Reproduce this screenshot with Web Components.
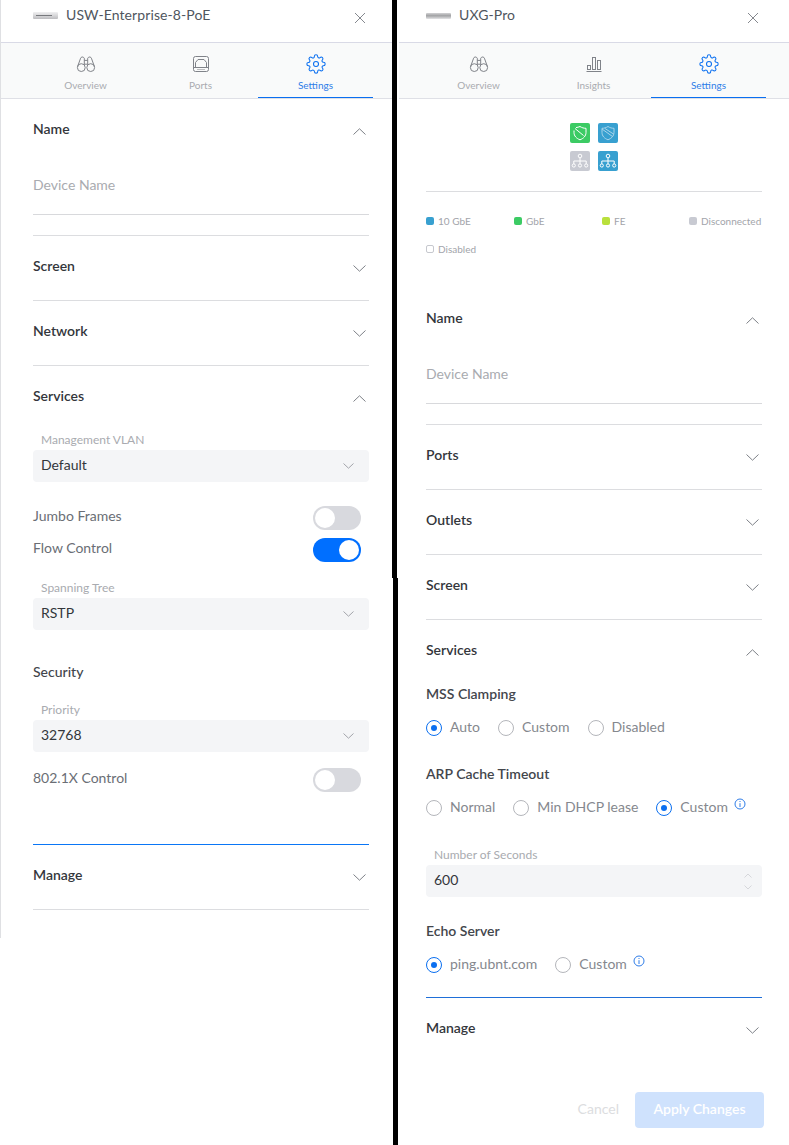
<!DOCTYPE html>
<html lang="en">
<head>
<meta charset="utf-8">
<title>Device settings</title>
<style>
html, body { margin: 0; padding: 0; background: #fff; }
body { width: 789px; height: 1145px; overflow: hidden; font-family: Lato, "Open Sans", sans-serif; }
#page { display: flex; height: 1145px; }
.gap {
    flex: 0 0 6px;
    background:
        linear-gradient(#000, #000) 0 0 / 5px 578px no-repeat,
        linear-gradient(#000, #000) 1px 578px / 5px 567px no-repeat;
}
device-panel.left { flex: 0 0 392px; height: 938px; --pl: 32px; --pr: 23px; --tabs-l: 27px; --bl: #dfe0e3; }
device-panel.right { flex: 0 0 391px; height: 1145px; --pl: 27px; --pr: 27px; --tabs-l: 22px; --bl: transparent; }
</style>
</head>
<body>
<div id="page">
    <device-panel class="left" name="USW-Enterprise-8-PoE">
        <device-thumb slot="thumb" kind="switch"></device-thumb>
        <panel-tab slot="tabs" label="Overview" icon="overview"></panel-tab>
        <panel-tab slot="tabs" label="Ports" icon="ports"></panel-tab>
        <panel-tab slot="tabs" label="Settings" icon="settings" active></panel-tab>

        <acc-section title="Name" open><text-field placeholder="Device Name"></text-field></acc-section>
        <acc-section title="Screen"></acc-section>
        <acc-section title="Network"></acc-section>
        <acc-section title="Services" open tight line="#0a76f6">
            <select-field label="Management VLAN" value="Default"></select-field>
            <toggle-row label="Jumbo Frames" style="margin-top:24px"></toggle-row>
            <toggle-row label="Flow Control" on style="margin-top:8px"></toggle-row>
            <select-field label="Spanning Tree" value="RSTP" style="margin-top:16px"></select-field>
            <sub-head style="margin-top:32px" light>Security</sub-head>
            <select-field label="Priority" value="32768" style="margin-top:18px"></select-field>
            <toggle-row label="802.1X Control" style="margin-top:16px;margin-bottom:52px"></toggle-row>
        </acc-section>
        <acc-section title="Manage"></acc-section>
    </device-panel>

    <div class="gap"></div>

    <device-panel class="right" name="UXG-Pro">
        <device-thumb slot="thumb" kind="gateway"></device-thumb>
        <panel-tab slot="tabs" label="Overview" icon="overview"></panel-tab>
        <panel-tab slot="tabs" label="Insights" icon="insights"></panel-tab>
        <panel-tab slot="tabs" label="Settings" icon="settings" active></panel-tab>

        <port-summary></port-summary>

        <acc-section title="Name" open><text-field placeholder="Device Name"></text-field></acc-section>
        <acc-section title="Ports"></acc-section>
        <acc-section title="Outlets"></acc-section>
        <acc-section title="Screen"></acc-section>
        <acc-section title="Services" open tight line="#1f6fd8">
            <sub-head>MSS Clamping</sub-head>
            <radio-row style="margin-top:12px">
                <radio-item label="Auto" checked></radio-item>
                <radio-item label="Custom"></radio-item>
                <radio-item label="Disabled"></radio-item>
            </radio-row>
            <sub-head style="margin-top:24px">ARP Cache Timeout</sub-head>
            <radio-row style="margin-top:12px">
                <radio-item label="Normal"></radio-item>
                <radio-item label="Min DHCP lease"></radio-item>
                <radio-item label="Custom" checked info></radio-item>
            </radio-row>
            <select-field label="Number of Seconds" value="600" stepper style="margin-top:25px"></select-field>
            <sub-head style="margin-top:24px">Echo Server</sub-head>
            <radio-row style="margin-top:12px;margin-bottom:20px">
                <radio-item label="ping.ubnt.com" checked></radio-item>
                <radio-item label="Custom" info></radio-item>
            </radio-row>
        </acc-section>
        <acc-section title="Manage" noline></acc-section>
        <panel-footer></panel-footer>
    </device-panel>
</div>

<script>
const icons = {
    overview: `<svg width="20" height="20" viewBox="0 0 20 20" fill="none" stroke="currentColor" stroke-width="1">
        <circle cx="5.3" cy="13.6" r="3.9"/><circle cx="14.7" cy="13.6" r="3.9"/>
        <path d="M1.5 12.8 4.6 4.2C4.9 3 6.9 2.6 7.6 3.4L8.3 4.2V10.8M18.5 12.8 15.4 4.2C15.1 3 13.1 2.6 12.4 3.4L11.7 4.2V10.8M8.3 6.4H11.7M8.3 10.2H11.7"/>
    </svg>`,
    ports: `<svg width="20" height="20" viewBox="0 0 20 20" fill="none" stroke="currentColor" stroke-width="1">
        <rect x="2.5" y="2.5" width="15" height="15" rx="2"/>
        <path d="M4.5 13.5V8.5L7 5.5H13L15.5 8.5V13.5"/><path d="M2.5 13.5H17.5"/>
        <path d="M6.5 15.5H13.5" stroke-dasharray="1 1"/>
    </svg>`,
    insights: `<svg width="20" height="20" viewBox="0 0 20 20" fill="none" stroke="currentColor" stroke-width="1">
        <path d="M2.5 17.5H17.5"/><rect x="3.5" y="11.5" width="3" height="4"/><rect x="8.5" y="3.5" width="3" height="12"/><rect x="13.5" y="6.5" width="3" height="9"/>
    </svg>`,
    settings: `<svg width="20" height="20" viewBox="0 0 24 24" fill="none" stroke="currentColor" stroke-width="1.25" stroke-linejoin="round">
        <circle cx="12" cy="12" r="3"/>
        <path d="M19.4 15a1.65 1.65 0 0 0 .33 1.82l.06.06a2 2 0 1 1-2.83 2.83l-.06-.06a1.65 1.65 0 0 0-1.82-.33 1.65 1.65 0 0 0-1 1.51V21a2 2 0 1 1-4 0v-.09A1.65 1.65 0 0 0 9 19.4a1.65 1.65 0 0 0-1.82.33l-.06.06a2 2 0 1 1-2.83-2.83l.06-.06a1.65 1.65 0 0 0 .33-1.82 1.65 1.65 0 0 0-1.51-1H3a2 2 0 1 1 0-4h.09A1.65 1.65 0 0 0 4.6 9a1.65 1.65 0 0 0-.33-1.82l-.06-.06a2 2 0 1 1 2.83-2.83l.06.06a1.65 1.65 0 0 0 1.82.33H9a1.65 1.65 0 0 0 1-1.51V3a2 2 0 1 1 4 0v.09a1.65 1.65 0 0 0 1 1.51 1.65 1.65 0 0 0 1.82-.33l.06-.06a2 2 0 1 1 2.83 2.83l-.06.06a1.65 1.65 0 0 0-.33 1.82V9a1.65 1.65 0 0 0 1.51 1H21a2 2 0 1 1 0 4h-.09a1.65 1.65 0 0 0-1.51 1z"/>
    </svg>`,
    shield: `<svg width="20" height="20" viewBox="0 0 20 20" fill="none" stroke="#fff" stroke-width="1">
        <path d="M6 4.6C7.5 4.4 8.8 4 10 3.5 12 4.8 13.8 5.3 16 5.3V9.5C16 13 13.5 15.5 10 16.8 6.5 15.5 4 13 4 9.5V7.5"/><path d="M5 5.5 13.5 12.5"/>
    </svg>`,
    shieldDim: `<svg width="20" height="20" viewBox="0 0 20 20" fill="none" stroke="#a8d4ea" stroke-width="1">
        <path d="M10 3.5C12 4.8 13.8 5.3 16 5.3V9.5C16 13 13.5 15.5 10 16.8 6.5 15.5 4 13 4 9.5V5.3C6.2 5.3 8 4.8 10 3.5Z"/><path d="M4 6 14.5 13.5M7 5.5 15.5 11"/>
    </svg>`,
    tree: `<svg width="20" height="20" viewBox="0 0 20 20" fill="none" stroke="#fff" stroke-width="1">
        <circle cx="10" cy="5" r="1.8"/><circle cx="3.8" cy="14.5" r="1.6"/><circle cx="10" cy="14.5" r="1.6"/><circle cx="16.2" cy="14.5" r="1.6"/>
        <path d="M10 6.8V12.9M3.8 12.9V10H16.2V12.9"/>
    </svg>`
}

const chevron = (w, h, up, color = '#7d8087') => `<svg width="${w}" height="${h}" viewBox="0 0 ${w} ${h}" fill="none" stroke="${color}" stroke-width="1">
    <path d="${up ? `M0.5 ${h - 0.5} ${w / 2} 0.8 ${w - 0.5} ${h - 0.5}` : `M0.5 0.5 ${w / 2} ${h - 0.8} ${w - 0.5} 0.5`}"/></svg>`

function open(el, html) {
    el.attachShadow({ mode: 'open' }).innerHTML = html
}

customElements.define('device-panel', class extends HTMLElement {
    constructor() {
        super()
        open(this, `
        <style>
        :host { display: block; box-sizing: border-box; background: #fff; border-left: 1px solid var(--bl); }
        header { display: flex; align-items: center; height: 42px; border-bottom: 1px solid #d9dae6; padding-left: var(--pl); padding-right: var(--pr); }
        .thumb { flex: 0 0 33px; display: flex; height: 32px; align-items: center; }
        h1 { flex: 1; margin: 0 0 12px; font-size: 14px; line-height: 20px; font-weight: 400; color: #50565e; letter-spacing: .1px; }
        .close { margin-right: 3px; margin-top: -6px; display: flex; }
        nav { display: flex; height: 55px; background: #f9fafa; border-bottom: 1px solid #dfe0e6; padding-left: var(--tabs-l); }
        main { padding-left: var(--pl); padding-right: var(--pr); }
        </style>
        <header>
            <div class="thumb"><slot name="thumb"></slot></div>
            <h1>${this.getAttribute('name')}</h1>
            <div class="close"><svg width="12" height="12" viewBox="0 0 12 12" stroke="#85888e" stroke-width="1"><path d="M1 1 11 11M11 1 1 11"/></svg></div>
        </header>
        <nav><slot name="tabs"></slot></nav>
        <main><slot></slot></main>`)
    }
})

customElements.define('device-thumb', class extends HTMLElement {
    constructor() {
        super()
        const gateway = this.getAttribute('kind') == 'gateway'
        open(this, `
        <style>
        :host { display: block; margin-top: -11px; }
        .box { width: 25px; height: ${gateway ? 6 : 7}px; border-radius: 1px; position: relative;
            background: ${gateway ? 'linear-gradient(#d2d2d4, #a2a3a5 45%, #e4e4e6)' : 'linear-gradient(#f0f0f1, #dcdcde 40%, #bdbdc0)'}; }
        .leds { display: ${gateway ? 'none' : 'block'}; position: absolute; left: 3px; right: 6px; top: 3px; height: 1px; background: #77797d; }
        </style>
        <div class="box"><div class="leds"></div></div>`)
    }
})

customElements.define('panel-tab', class extends HTMLElement {
    constructor() {
        super()
        const active = this.hasAttribute('active')
        open(this, `
        <style>
        :host { display: block; width: 115px; height: 55px; box-sizing: border-box; position: relative; text-align: center; color: ${active ? '#0a6ff0' : '#808389'}; }
        .icon { padding-top: 11px; height: 20px; display: flex; justify-content: center; }
        .label { margin-top: 4px; font-size: 10px; line-height: 14px; color: ${active ? '#2f7de8' : '#a9abb0'}; }
        .bar { display: ${active ? 'block' : 'none'}; position: absolute; left: 0; right: 0; bottom: 0; height: 1px; background: #0a6ff0; }
        </style>
        <div class="icon">${icons[this.getAttribute('icon')]}</div>
        <div class="label">${this.getAttribute('label')}</div>
        <div class="bar"></div>`)
    }
})

customElements.define('acc-section', class extends HTMLElement {
    constructor() {
        super()
        const isOpen = this.hasAttribute('open')
        const line = this.hasAttribute('noline') ? 'transparent' : (this.getAttribute('line') || '#dcdde0')
        const pad = isOpen && !this.hasAttribute('tight') ? 20 : 0
        open(this, `
        <style>
        :host { display: block; border-bottom: 1px solid ${line}; }
        .head { display: flex; align-items: center; justify-content: space-between; height: 64px; }
        .title { font-size: 14px; line-height: 20px; font-weight: 600; color: #33363b; margin-bottom: 4px; }
        .chev { display: flex; margin-right: 3px; }
        .body { padding-bottom: ${pad}px; display: ${isOpen ? 'block' : 'none'}; }
        </style>
        <div class="head"><div class="title">${this.getAttribute('title')}</div><div class="chev">${chevron(13, 7, isOpen)}</div></div>
        <div class="body"><slot></slot></div>`)
    }
})

customElements.define('text-field', class extends HTMLElement {
    constructor() {
        super()
        open(this, `
        <style>
        :host { display: block; height: 52px; box-sizing: border-box; border-bottom: 1px solid #d8d9dc; font-size: 14px; line-height: 20px; color: #a9abb0; }
        div { padding-top: 12px; }
        </style>
        <div>${this.getAttribute('placeholder')}</div>`)
    }
})

customElements.define('select-field', class extends HTMLElement {
    constructor() {
        super()
        const stepper = this.hasAttribute('stepper')
        const arrows = stepper
            ? `<div class="steps"><svg width="8" height="5" viewBox="0 0 8 5" fill="none" stroke="#d6d7db"><path d="M.5 4.5 4 1 7.5 4.5"/></svg><svg width="8" height="5" viewBox="0 0 8 5" fill="none" stroke="#d6d7db"><path d="M.5 .5 4 4 7.5 .5"/></svg></div>`
            : `<div class="chev">${chevron(11, 6, false, '#a2a4aa')}</div>`
        open(this, `
        <style>
        :host { display: block; }
        label { display: block; padding-left: 8px; font-size: 12px; line-height: 20px; color: #a9abb0; }
        .box { display: flex; align-items: center; justify-content: space-between; height: 32px; background: #f4f5f7; border-radius: 4px; padding: 0 15px 0 8px; font-size: 14px; color: #33363b; }
        .box span { margin-top: -4px; }
        .chev { display: flex; }
        .steps { display: flex; flex-direction: column; gap: 7px; margin-right: -10px; padding-right: 5px; }
        .steps svg { display: block; }
        </style>
        <label>${this.getAttribute('label')}</label>
        <div class="box"><span>${this.getAttribute('value')}</span>${arrows}</div>`)
    }
})

customElements.define('toggle-row', class extends HTMLElement {
    constructor() {
        super()
        const on = this.hasAttribute('on')
        open(this, `
        <style>
        :host { display: flex; align-items: center; justify-content: space-between; height: 24px; font-size: 14px; color: #6a6e75; }
        span { margin-top: -6px; }
        .track { width: 48px; height: 24px; box-sizing: border-box; border-radius: 12px; margin-right: 8px; padding: 2px; display: flex; background: ${on ? '#006fff' : '#d8d9de'}; justify-content: ${on ? 'flex-end' : 'flex-start'}; }
        .knob { width: 20px; height: 20px; border-radius: 50%; background: #fff; }
        </style>
        <span>${this.getAttribute('label')}</span>
        <div class="track"><div class="knob"></div></div>`)
    }
})

customElements.define('sub-head', class extends HTMLElement {
    constructor() {
        super()
        const weight = this.hasAttribute('light') ? 500 : 600
        open(this, `
        <style>
        :host { display: block; font-size: 14px; line-height: 20px; font-weight: ${weight}; color: #43464c; }
        </style>
        <slot></slot>`)
    }
})

customElements.define('radio-row', class extends HTMLElement {
    constructor() {
        super()
        open(this, `
        <style>
        :host { display: flex; gap: 18px; height: 24px; align-items: center; }
        </style>
        <slot></slot>`)
    }
})

customElements.define('radio-item', class extends HTMLElement {
    constructor() {
        super()
        const checked = this.hasAttribute('checked')
        const info = this.hasAttribute('info')
            ? `<svg class="info" width="12" height="12" viewBox="0 0 12 12" fill="none" stroke="#2f7de8" stroke-width="1"><circle cx="6" cy="6" r="5"/><path d="M6 5.2V9M6 3V4"/></svg>`
            : ''
        open(this, `
        <style>
        :host { display: flex; align-items: center; position: relative; font-size: 14px; color: #85888e; }
        .dot { width: 16px; height: 16px; box-sizing: border-box; border-radius: 50%; border: 1px solid ${checked ? '#0a6ff0' : '#b4b6bb'}; margin-right: 8px; display: flex; align-items: center; justify-content: center; }
        .dot i { width: 6px; height: 6px; border-radius: 50%; background: #0a6ff0; display: ${checked ? 'block' : 'none'}; }
        span { margin-top: -4px; }
        .info { position: absolute; right: -18px; top: -2px; }
        </style>
        <div class="dot"><i></i></div><span>${this.getAttribute('label')}</span>${info}`)
    }
})

customElements.define('status-tile', class extends HTMLElement {
    constructor() {
        super()
        open(this, `
        <style>
        :host { display: block; width: 20px; height: 20px; border-radius: 2px; background: ${this.getAttribute('color')}; }
        svg { display: block; }
        </style>
        ${icons[this.getAttribute('icon')]}`)
    }
})

customElements.define('legend-dot', class extends HTMLElement {
    constructor() {
        super()
        const color = this.getAttribute('color')
        open(this, `
        <style>
        :host { display: flex; align-items: center; height: 14px; font-size: 10px; color: #a2a4aa; white-space: nowrap; }
        i { width: 8px; height: 8px; border-radius: 2px; margin-right: 4px; box-sizing: border-box; ${color ? `background:${color};` : 'border:1px solid #c6c8ce;'} }
        </style>
        <i></i><span><slot></slot></span>`)
    }
})

customElements.define('port-summary', class extends HTMLElement {
    constructor() {
        super()
        open(this, `
        <style>
        :host { display: block; }
        .tiles { display: grid; grid-template-columns: 20px 20px; gap: 8px; justify-content: center; padding: 24px 0 20px; border-bottom: 1px solid #dcdde0; }
        .legend { display: grid; grid-template-columns: 88px 88px 87px auto; row-gap: 14px; padding: 22px 0 32px; }
        </style>
        <div class="tiles">
            <status-tile color="#3ccb64" icon="shield"></status-tile>
            <status-tile color="#38a0d0" icon="shieldDim"></status-tile>
            <status-tile color="#c8cad2" icon="tree"></status-tile>
            <status-tile color="#38a0d0" icon="tree"></status-tile>
        </div>
        <div class="legend">
            <legend-dot color="#38a0d0">10 GbE</legend-dot>
            <legend-dot color="#3ccb64">GbE</legend-dot>
            <legend-dot color="#b9e03c">FE</legend-dot>
            <legend-dot color="#c8cad2">Disconnected</legend-dot>
            <legend-dot>Disabled</legend-dot>
        </div>`)
    }
})

customElements.define('panel-footer', class extends HTMLElement {
    constructor() {
        super()
        open(this, `
        <style>
        :host { display: flex; justify-content: flex-end; align-items: center; gap: 16px; margin: 29px -2px 0 0; font-size: 14px; }
        span, .apply span { margin-top: -4px; }
        .cancel { color: #dcdde0; }
        .apply { width: 129px; height: 36px; border-radius: 4px; background: #cfe2fd; color: #fff; font-weight: 600; display: flex; align-items: center; justify-content: center; }
        </style>
        <span class="cancel">Cancel</span>
        <div class="apply"><span>Apply Changes</span></div>`)
    }
})
</script>
</body>
</html>
